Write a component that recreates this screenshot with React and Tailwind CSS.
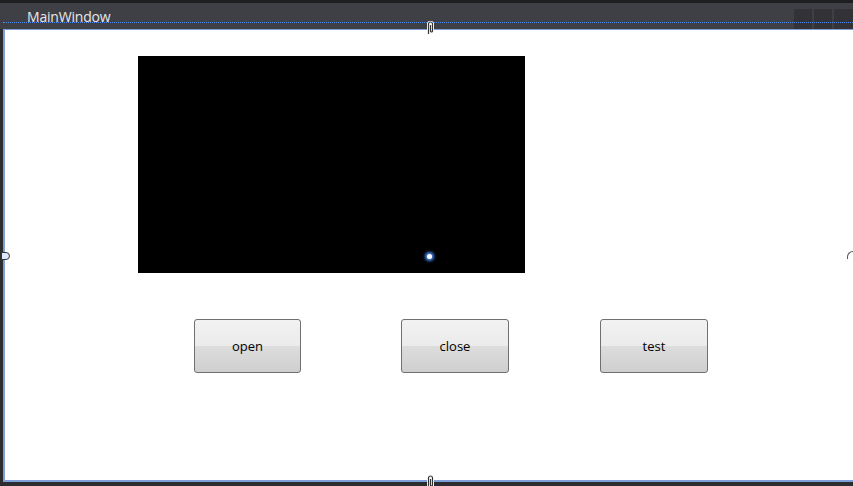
import React from 'react';

const Btn = ({ label, className }) => (
    <button
        className={`w-[107px] h-[54px] pt-[2px] rounded-[3px] border border-[#707070] bg-[linear-gradient(#f2f2f2_0%,#ebebeb_50%,#dddddd_50%,#cfcfcf_100%)] text-[13px] text-black ${className}`}
        style={{ fontFamily: '"Segoe UI", "Open Sans", "Liberation Sans", sans-serif' }}
    >
        {label}
    </button>
);

const Clip = ({ className }) => (
    <svg className={className} width="9" height="16" viewBox="0 0 9 16">
        <rect x="1" y="1" width="7" height="14" rx="3" fill="#fff" />
        <path d="M2.5 14V4a2 2 0 0 1 4 0v7a1 1 0 0 1-2 0V5" fill="none" stroke="#333" strokeWidth="1.2" />
    </svg>
);

export default function App() {
    return (
        <div className="w-[853px] h-[486px] bg-[#2d2d30] relative overflow-hidden" style={{ fontFamily: '"Segoe UI", "Open Sans", "Liberation Sans", sans-serif' }}>
            {/* title bar */}
            <div className="h-[29px] border-t-[3px] border-[#1f1f22] bg-[#3f3f46] flex items-start relative">
                <span className="ml-[27px] mt-[5px] text-[14px] leading-[18px] text-[#e8e8e8] tracking-[-0.2px]">MainWindow</span>
                <div className="ml-auto mt-[6px] flex gap-[2px]">
                    <div className="w-[18px] h-[20px] bg-[#333337]" />
                    <div className="w-[18px] h-[20px] bg-[#333337]" />
                    <div className="w-[19px] h-[20px] bg-[#333337]" />
                </div>
                <div className="absolute left-[3px] right-0 top-[19px] border-t border-dotted border-[#4d8bf0]" />
            </div>
            {/* content */}
            <div className="ml-[3px] h-[453px] bg-white border-l-2 border-b-2 border-t border-[#7f9fd8] flex flex-col">
                <div className="ml-[133px] mt-[26px] w-[387px] h-[217px] bg-black relative">
                    <div className="absolute left-[289px] top-[198px] w-[5px] h-[5px] rounded-full bg-white shadow-[0_0_3px_2px_#4d8bf0]" />
                </div>
                <div className="flex mt-[46px]">
                    <Btn label="open" className="ml-[189px]" />
                    <Btn label="close" className="ml-[100px] w-[108px]" />
                    <Btn label="test" className="ml-[91px] w-[108px]" />
                </div>
            </div>
            <Clip className="absolute left-[426px] top-[20px]" />
            <Clip className="absolute left-[426px] top-[474px]" />
            <div className="absolute left-[1px] top-[252px] w-[9px] h-[8px] border border-[#333] rounded-r-full bg-[#dde8fa]" />
            <div className="absolute left-[847px] top-[251px] w-[6px] h-[8px] border-l border-t border-[#555] rounded-tl-full" />
        </div>
    );
}
